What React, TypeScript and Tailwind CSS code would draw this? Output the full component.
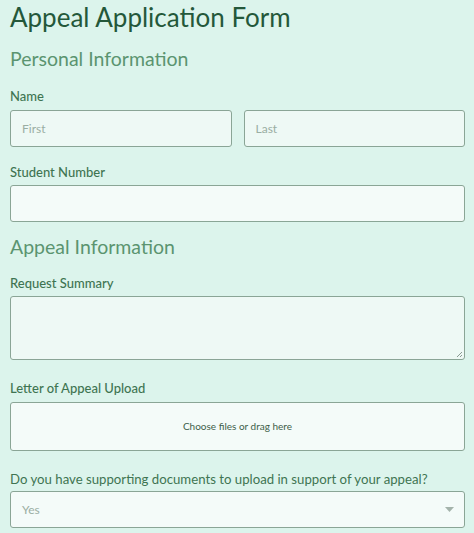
import React from "react";

export default function App() {
  const font = { fontFamily: 'Lato, "Noto Sans", sans-serif' };
  return (
    <div className="min-h-[533px] w-[474px] bg-[#dcf4ec] pl-[10px] pr-[9px] overflow-hidden" style={font}>
      <h1 className="text-[26px] leading-[34px] text-[#24583a]">Appeal Application Form</h1>
      <h2 className="mt-[12px] text-[19.5px] leading-[26px] text-[#5b9470]">Personal Information</h2>
      <div className="mt-[16px] text-[13px] leading-[16px] font-medium text-[#3f7452]">Name</div>
      <div className="mt-[6px] flex gap-[12px]">
        <div className="h-[37px] flex-1 rounded-[3px] border border-[#8aa596] bg-[#eef9f5] flex items-center pl-[11px] text-[12px] text-[#9aaea3]">First</div>
        <div className="h-[37px] flex-1 rounded-[3px] border border-[#8aa596] bg-[#eef9f5] flex items-center pl-[11px] text-[12px] text-[#9aaea3]">Last</div>
      </div>
      <div className="mt-[17px] text-[13px] leading-[16px] font-medium text-[#3f7452]">Student Number</div>
      <div className="mt-[5px] h-[37px] rounded-[3px] border border-[#8aa596] bg-[#f4fbf9]"></div>
      <h2 className="mt-[12px] text-[19.5px] leading-[26px] text-[#5b9470]">Appeal Information</h2>
      <div className="mt-[15px] text-[13px] leading-[16px] font-medium text-[#3f7452]">Request Summary</div>
      <div className="relative mt-[5px] h-[64px] rounded-[3px] border border-[#8aa596] bg-[#eef9f5]">
        <svg className="absolute right-[1px] bottom-[1px]" width="8" height="8" viewBox="0 0 8 8">
          <path d="M7 2 L2 7 M7 5 L5 7" stroke="#8a9a92" strokeWidth="1" />
        </svg>
      </div>
      <div className="mt-[20px] text-[13px] leading-[16px] font-medium text-[#3f7452]">Letter of Appeal Upload</div>
      <div className="mt-[6px] h-[49px] rounded-[3px] border border-[#8aa596] bg-[#f4fbf9] flex items-center justify-center text-[10px] text-[#3d5e4a]">Choose files or drag here</div>
      <div className="mt-[19px] text-[13.2px] leading-[18px] text-[#3f7452] whitespace-nowrap">Do you have supporting documents to upload in support of your appeal?</div>
      <div className="mt-[3px] h-[37px] rounded-[3px] border border-[#8aa596] bg-[#f4fbf9] flex items-center justify-between pl-[11px] pr-[10px] text-[12px] text-[#9aaea3]">
        <span>Yes</span>
        <svg width="9" height="5" viewBox="0 0 9 5"><path d="M0 0 L9 0 L4.5 5 Z" fill="#a4b3ab" /></svg>
      </div>
    </div>
  );
}
